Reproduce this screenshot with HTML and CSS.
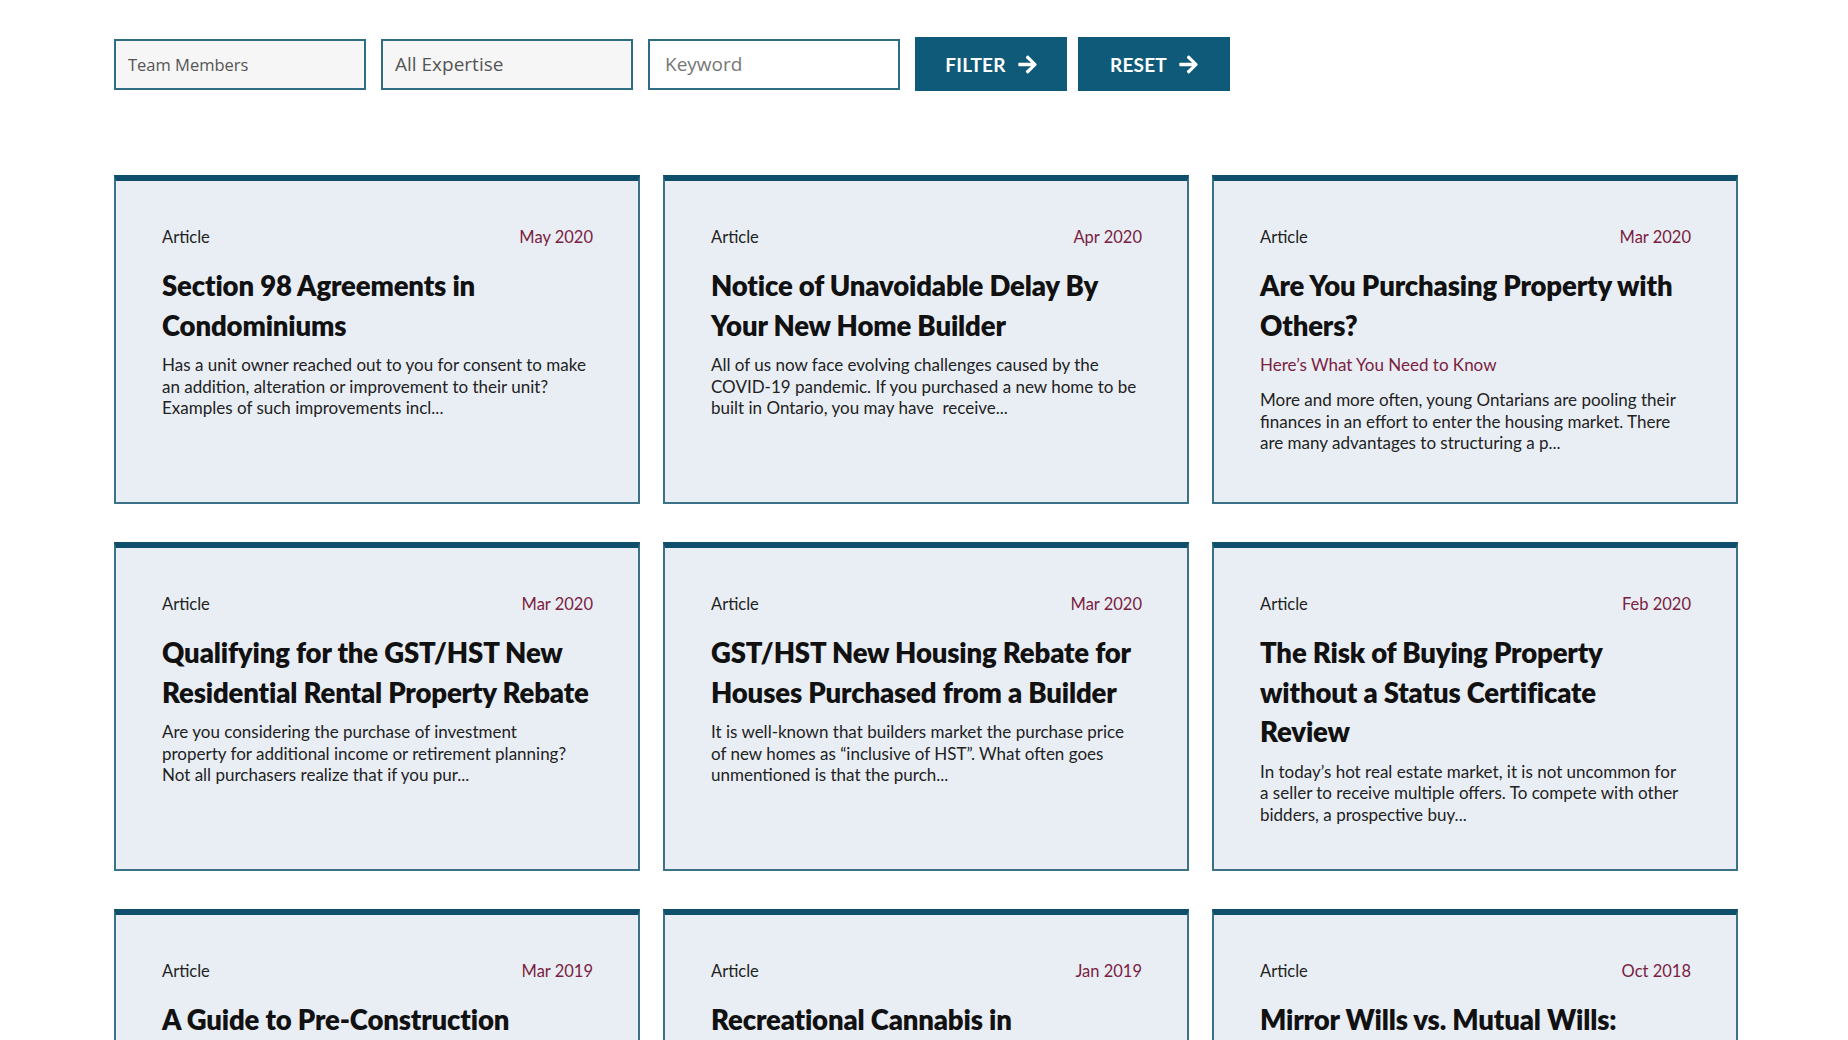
FILE: index.html
```html
<!DOCTYPE html>
<html lang="en">
<head>
<meta charset="UTF-8" />
<meta name="viewport" content="width=device-width, initial-scale=1" />
<title>Insights</title>
<link rel="stylesheet" href="styles.css">
</head>
<body>
<div class="page">
  <form class="filters">
    <select class="field select">
      <option>Team Members</option>
    </select>
    <select class="field select big">
      <option>All Expertise</option>
    </select>
    <input type="text" class="field keyword" placeholder="Keyword" />
    <button type="button" class="btn">FILTER
      <svg class="arrow" viewBox="0 0 448 512"><path d="M190.5 66.9l22.2-22.2c9.4-9.4 24.6-9.4 33.9 0L441 239c9.4 9.4 9.4 24.6 0 33.9L246.6 467.3c-9.4 9.4-24.6 9.4-33.9 0l-22.2-22.2c-9.5-9.5-9.3-25 .4-34.3L311.4 296H24c-13.3 0-24-10.7-24-24v-32c0-13.3 10.7-24 24-24h287.4L190.9 101.2c-9.8-9.3-10-24.8-.4-34.3z"/></svg>
    </button>
    <button type="button" class="btn">RESET
      <svg class="arrow" viewBox="0 0 448 512"><path d="M190.5 66.9l22.2-22.2c9.4-9.4 24.6-9.4 33.9 0L441 239c9.4 9.4 9.4 24.6 0 33.9L246.6 467.3c-9.4 9.4-24.6 9.4-33.9 0l-22.2-22.2c-9.5-9.5-9.3-25 .4-34.3L311.4 296H24c-13.3 0-24-10.7-24-24v-32c0-13.3 10.7-24 24-24h287.4L190.9 101.2c-9.8-9.3-10-24.8-.4-34.3z"/></svg>
    </button>
  </form>

  <div class="cards">
    <a class="card" href="#">
      <div class="meta"><span>Article</span><span class="date">May 2020</span></div>
      <h3>Section 98 Agreements in Condominiums</h3>
      <p class="excerpt">Has a unit owner reached out to you for consent to make an addition, alteration or improvement to their unit? Examples of such improvements incl...</p>
    </a>
    <a class="card" href="#">
      <div class="meta"><span>Article</span><span class="date">Apr 2020</span></div>
      <h3>Notice of Unavoidable Delay By Your New Home Builder</h3>
      <p class="excerpt">All of us now face evolving challenges caused by the COVID-19 pandemic. If you purchased a new home to be built in Ontario, you may have &nbsp;receive...</p>
    </a>
    <a class="card" href="#">
      <div class="meta"><span>Article</span><span class="date">Mar 2020</span></div>
      <h3>Are You Purchasing Property with Others?</h3>
      <p class="subtitle">Here’s What You Need to Know</p>
      <p class="excerpt">More and more often, young Ontarians are pooling their finances in an effort to enter the housing market. There are many advantages to structuring a p...</p>
    </a>
    <a class="card" href="#">
      <div class="meta"><span>Article</span><span class="date">Mar 2020</span></div>
      <h3>Qualifying for the GST/HST New Residential Rental Property Rebate</h3>
      <p class="excerpt">Are you considering the purchase of investment<br>property for additional income or retirement planning? Not all purchasers realize that if you pur...</p>
    </a>
    <a class="card" href="#">
      <div class="meta"><span>Article</span><span class="date">Mar 2020</span></div>
      <h3>GST/HST New Housing Rebate for Houses Purchased from a Builder</h3>
      <p class="excerpt">It is well-known that builders market the purchase price of new homes as “inclusive of HST”. What often goes unmentioned is that the purch...</p>
    </a>
    <a class="card" href="#">
      <div class="meta"><span>Article</span><span class="date">Feb 2020</span></div>
      <h3>The Risk of Buying Property without a Status Certificate Review</h3>
      <p class="excerpt">In today’s hot real estate market, it is not uncommon for<br>a seller to receive multiple offers. To compete with other bidders, a prospective buy...</p>
    </a>
    <a class="card" href="#">
      <div class="meta"><span>Article</span><span class="date">Mar 2019</span></div>
      <h3>A Guide to Pre-Construction Condominium Purchases</h3>
      <p class="excerpt">Buying a condominium before it is built can be an exciting way to enter the market, but there are a number of things purchasers should kn...</p>
    </a>
    <a class="card" href="#">
      <div class="meta"><span>Article</span><span class="date">Jan 2019</span></div>
      <h3>Recreational Cannabis in Condominiums</h3>
      <p class="excerpt">With the legalization of recreational cannabis in Canada, many condominium corporations are now considering how to address smoking and gr...</p>
    </a>
    <a class="card" href="#">
      <div class="meta"><span>Article</span><span class="date">Oct 2018</span></div>
      <h3>Mirror Wills vs. Mutual Wills: What is the Difference?</h3>
      <p class="excerpt">Spouses often prepare wills at the same time and with similar terms. While these are commonly called mirror wills, they are not the s...</p>
    </a>
  </div>
</div>
</body>
</html>
```

FILE: styles.css
```css
body {
  margin: 0;
  font-family: Lato, "Open Sans", Arial, sans-serif;
  background: white;
  color: #1d1d1f;
}
.page {
  width: 1623px;
  margin-left: 114px;
  padding-top: 37px;
}
.filters {
  display: flex;
  align-items: center;
  height: 54px;
}
.field {
  box-sizing: border-box;
  width: 252px;
  height: 51px;
  margin-right: 15px;
  padding: 0 12px;
  border: 2px solid #2f6d84;
  border-radius: 0;
  font-family: "Open Sans", Arial, sans-serif;
  font-size: 16.5px;
  color: #555;
  outline: none;
}
.select {
  background: #f6f6f6;
  appearance: none;
  -webkit-appearance: none;
}
.big {
  font-size: 19px;
}
.keyword {
  background: white;
  padding-left: 15px;
  font-size: 19px;
}
.keyword::placeholder {
  color: #777;
}
.btn {
  display: flex;
  align-items: center;
  justify-content: center;
  gap: 12px;
  width: 152px;
  height: 54px;
  margin-right: 11px;
  padding: 0;
  background: #0f5a78;
  color: white;
  border: none;
  border-radius: 0;
  font-family: Lato, Arial, sans-serif;
  font-weight: 700;
  font-size: 19px;
  letter-spacing: 0.2px;
}
.arrow {
  width: 19px;
  height: 21px;
  fill: white;
}
.cards {
  display: grid;
  grid-template-columns: repeat(3, 526px);
  column-gap: 23px;
  row-gap: 38px;
  margin-top: 84px;
}
.card {
  box-sizing: border-box;
  min-height: 329px;
  padding: 44px 45px 30px 46px;
  background: #e9eef5;
  border: 2px solid #3b7288;
  border-top: 6px solid #0f4f6b;
  color: #1d1d1f;
  text-decoration: none;
}
.meta {
  display: flex;
  justify-content: space-between;
  font-size: 16.5px;
  line-height: 24px;
  color: #222;
}
.date {
  color: #7a2140;
}
.card h3 {
  margin: 17px 0 0 0;
  font-size: 27.5px;
  line-height: 39.5px;
  font-weight: 800;
  letter-spacing: -0.15px;
  color: #111;
}
.subtitle {
  margin: 9px 0 0 0;
  font-size: 17px;
  line-height: 22px;
  color: #7a2140;
}
.excerpt {
  margin: 9px 0 0 0;
  font-size: 17px;
  line-height: 21.6px;
  color: #222;
}
.subtitle + .excerpt {
  margin-top: 13px;
}
```
